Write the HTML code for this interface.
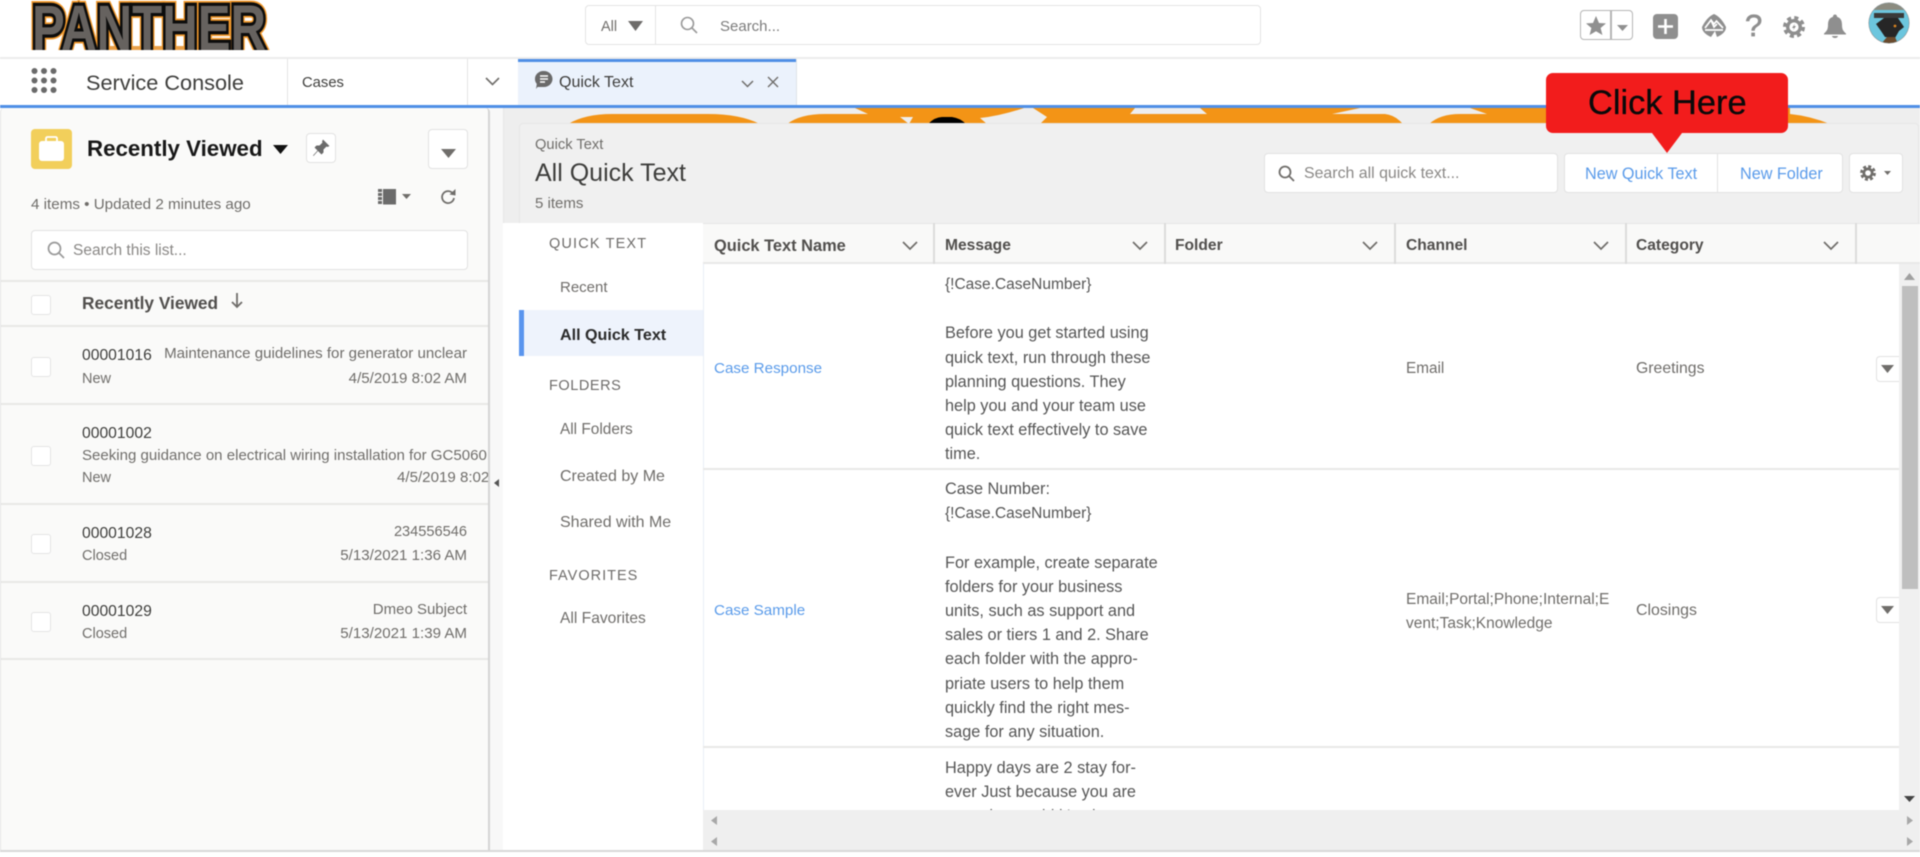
<!DOCTYPE html>
<html lang="en"><head><meta charset="utf-8"><title>Quick Text</title>
<style>
html,body{margin:0;padding:0;background:#fff}
#w{position:relative;width:1920px;height:857px;overflow:hidden;background:#fff;font-family:"Liberation Sans",sans-serif;color:#444;filter:blur(.4px)}
#w div,#w svg{position:absolute}
.t{white-space:nowrap;line-height:20px;height:20px;font-size:15px;margin-top:1px}
.g{color:#706e6b}.d{color:#3e3e3c}.b{color:#5a9bea}.h{font-weight:700;color:#514f4d;font-size:15.6px}
.box{background:#fff;border:1px solid #e2e2e2;box-sizing:border-box;border-radius:4px}
.cb{left:31px;width:20px;height:20px;background:#fff;border:1px solid #e4e4e4;box-sizing:border-box;border-radius:3px}
.ln{background:#e8e8e7;height:2px}
.cd{top:223px;width:2px;height:41px;background:#dcdcdb}
.nav{color:#6e6c6a;letter-spacing:1.15px;font-size:14.5px}
.msg{font-size:16.3px;line-height:24.2px;color:#565656;white-space:nowrap;left:945px;margin-top:1px}
.msg i{font-style:normal;font-size:15.5px}
</style></head><body>
<div id="w">

<!-- top bar -->
<svg style="left:24px;top:0" width="255" height="50" viewBox="0 0 255 50">
<polygon points="62,50 68,46 166,46 170,50" fill="#e8a04a"/>
<text x="8" y="50" font-family="Liberation Sans" font-weight="700" font-size="64" textLength="234" lengthAdjust="spacingAndGlyphs" fill="#66625f" stroke="#f39a2d" stroke-width="10" stroke-linejoin="miter" paint-order="stroke">PANTHER</text>
<text x="8" y="50" font-family="Liberation Sans" font-weight="700" font-size="64" textLength="234" lengthAdjust="spacingAndGlyphs" fill="#66625f" stroke="#0c0c0c" stroke-width="6.500" stroke-linejoin="miter" paint-order="stroke" aria-hidden="true">PANTHER</text>
</svg>

<div class="box" style="left:585px;top:5px;width:676px;height:40px;border-color:#e4e4e4"></div>
<div style="left:655px;top:6px;width:1px;height:38px;background:#e4e4e4"></div>
<div class="t g" style="left:601px;top:16px;font-size:14.5px">All</div>
<svg style="left:628px;top:21px" width="15" height="10"><polygon points="0,0 15,0 7.5,10" fill="#6e6c6a"/></svg>
<svg style="left:680px;top:16px" width="18" height="18" fill="none" stroke="#9a9a9a" stroke-width="1.6"><circle cx="7.5" cy="7.5" r="6"/><path d="M12 12l5 5"/></svg>
<div class="t" style="left:720px;top:16px;font-size:15px;color:#7c7c7c">Search...</div>

<div class="box" style="left:1580px;top:10px;width:53px;height:30px;border:1.5px solid #b5b5b5"></div>
<div style="left:1610px;top:10px;width:2px;height:30px;background:#b5b5b5"></div>
<svg style="left:1586px;top:16px" width="20" height="19"><polygon points="10,0 13,7 20,7.4 14.6,12 16.4,19 10,15.2 3.6,19 5.4,12 0,7.4 7,7" fill="#909090"/></svg>
<svg style="left:1617px;top:25px" width="11" height="6"><polygon points="0,0 11,0 5.5,6" fill="#909090"/></svg>
<svg style="left:1653px;top:14px" width="25" height="25"><rect width="25" height="25" rx="4" fill="#8f8f8f"/><path d="M12.5 5v15M5 12.5h15" stroke="#fff" stroke-width="2.6"/></svg>
<svg style="left:1702px;top:14px" width="24" height="23" viewBox="0 0 24 23"><path d="M12 0Q19 3 24 13Q24 19 15 23L13 17L9 23Q0 19 0 13Q5 3 12 0Z" fill="#8f8f8f"/><path d="M3 14L9 6L12 10L14.5 7L21 14M9 6L12 13L15 10M3 16H21" fill="none" stroke="#fff" stroke-width="1.7"/></svg>
<div class="t" style="left:1745px;top:10px;font-size:31px;line-height:30px;height:30px;color:#8f8f8f;-webkit-text-stroke:.7px #8f8f8f">?</div>
<svg style="left:1783px;top:16px" width="22" height="22" viewBox="-11 -11 22 22"><circle r="8" fill="#8f8f8f"/><circle r="9.3" fill="none" stroke="#8f8f8f" stroke-width="3.4" stroke-dasharray="4.1 3.2"/><circle r="4.6" fill="#fff"/><path d="M1-3.5L-2 1H0L-1 3.5L2-1H0Z" fill="#8f8f8f"/></svg>
<svg style="left:1823px;top:14px" width="24" height="24"><path d="M12 0.5a2 2 0 012 2.2C18 4 19 7 19 11c0 4 1 6 4 8.5V20.5H1V19.5C4 17 5 15 5 11c0-4 1-7 5-8.3A2 2 0 0112 0.5Z" fill="#8f8f8f"/><path d="M9 22h6a3 2 0 01-6 0Z" fill="#8f8f8f"/></svg>
<svg style="left:1868px;top:2px" width="42" height="42" viewBox="0 0 42 42"><defs><clipPath id="av"><circle cx="21" cy="21" r="20"/></clipPath></defs><circle cx="21" cy="21" r="20.5" fill="#8a8a8a"/><g clip-path="url(#av)"><rect width="42" height="42" fill="#6cc6de"/><rect x="0" y="0" width="42" height="8" fill="#8c8c80"/><rect x="6" y="11" width="30" height="5" fill="#3a3a3a"/><path d="M8 22L16 16H30L36 25L31 29L27 36L17 35L13 29Z" fill="#262626"/><circle cx="27" cy="24" r="1.4" fill="#d9821f"/><path d="M13 42L19 35H27L30 42Z" fill="#6a4a2c"/></g></svg>

<div style="left:0;top:57px;width:1920px;height:2px;background:#ececec"></div>

<!-- tab bar -->
<svg style="left:31px;top:68px" width="26" height="25" fill="#6a6a6a"><circle cx="3.5" cy="3" r="3"/><circle cx="13" cy="3" r="3"/><circle cx="22.5" cy="3" r="3"/><circle cx="3.5" cy="12.5" r="3"/><circle cx="13" cy="12.5" r="3"/><circle cx="22.5" cy="12.5" r="3"/><circle cx="3.5" cy="22" r="3"/><circle cx="13" cy="22" r="3"/><circle cx="22.5" cy="22" r="3"/></svg>
<div class="t" style="left:86px;top:72px;font-size:21.7px;color:#3e3e3c">Service Console</div>
<div style="left:287px;top:59px;width:1px;height:46px;background:#e4e4e4"></div>
<div class="t" style="left:302px;top:72px;font-size:14.8px;color:#3e3e3c">Cases</div>
<div style="left:467px;top:59px;width:1px;height:46px;background:#e4e4e4"></div>
<svg style="left:485px;top:77px" width="15" height="9" fill="none" stroke="#706e6b" stroke-width="1.6"><path d="M1 1l6.5 6.5L14 1"/></svg>
<div style="left:518px;top:59px;width:278px;height:46px;background:#ebf2fc;border-right:1px solid #dfe3e8"></div>
<div style="left:518px;top:59px;width:278px;height:3px;background:#4f8fe6"></div>
<svg style="left:535px;top:71px" width="18" height="18"><path d="M9 0a8.5 8 0 110 16H2.5L1 18 1.8 13A8.5 8 0 019 0Z" fill="#6a6a6a"/><path d="M5 5h8M5 8h8M5 11h5" stroke="#fff" stroke-width="1.4"/></svg>
<div class="t" style="left:559px;top:72px;font-size:16px;color:#3e3e3c">Quick Text</div>
<svg style="left:741px;top:80px" width="13" height="8" fill="none" stroke="#706e6b" stroke-width="1.5"><path d="M1 1l5.5 5.5L12 1"/></svg>
<svg style="left:767px;top:76px" width="12" height="12" fill="none" stroke="#706e6b" stroke-width="1.4"><path d="M1 1l10 10M11 1L1 11"/></svg>
<div style="left:0;top:105px;width:1920px;height:3px;background:#4f8fe6"></div>

<!-- background strip -->
<div style="left:503px;top:108px;width:1417px;height:115px;background:#eeeeee"></div>
<svg style="left:0;top:108px" width="1920" height="16" viewBox="0 108 1920 16">
<g fill="#f39416">
<path d="M568 124Q585 114 612 114L708 114Q740 114 760 124Z"/>
<path d="M787 124Q800 114 825 114L868 114L855 108L1024 108Q1000 116 980 118L987 124Z"/>
<path d="M1033 108L1135 108L1130 114L1207 114L1200 108L1360 108L1332 114L1385 114Q1395 115 1403 124L1040 124L1047 117Z"/>
<path d="M1429 124Q1440 114 1460 114L1487 114L1470 108L1790 108L1790 114Q1810 116 1830 124Z"/>
</g>
<path d="M900 117L913 117L909 124Z" fill="#eee"/>
<path d="M928 124Q935 117 942 117L952 117Q960 118 966 124Z" fill="#000"/>
</svg>

<!-- left panel -->
<div style="left:0;top:108px;width:490px;height:744px;background:#fafaf9;border-left:1px solid #e4e4e4;border-right:2px solid #d4d4d4;box-sizing:border-box;overflow:hidden;border-radius:4px 4px 0 0"></div>
<div style="left:490px;top:108px;width:13px;height:744px;background:#f8f8f8;border-right:1px solid #e6e6e6"></div>

<svg style="left:31px;top:129px" width="41" height="40"><rect width="41" height="40" rx="4" fill="#f2cf5b"/><rect x="8" y="12" width="25" height="20" rx="3" fill="#fff"/><path d="M15 12V9.500a1.500 1.500 0 011.500-1.500h8a1.500 1.500 0 011.500 1.500V12" fill="none" stroke="#fff" stroke-width="1.8"/></svg>
<div class="t" style="left:87px;top:136px;font-size:22.3px;font-weight:700;line-height:24px;height:24px;color:#181818">Recently Viewed</div>
<svg style="left:273px;top:145px" width="15" height="9"><polygon points="0,0 15,0 7.500,9" fill="#111"/></svg>
<div class="box" style="left:306px;top:133px;width:30px;height:30px"></div>
<svg style="left:312px;top:139px" width="18" height="18" fill="#6b6b6b"><path d="M11 0.500L17.500 7 15.500 8 14.500 7.500 11.500 10.500 11.500 13.500 9.500 15.500 6 12 1.500 17 1 16.500 5.500 11.500 2.500 8.500 4.500 6.500 7.500 6.500 10.500 3.500 10 2.500Z"/></svg>
<div class="box" style="left:428px;top:129px;width:40px;height:40px"></div>
<svg style="left:441px;top:149px" width="15" height="9"><polygon points="0,0 15,0 7.500,9" fill="#706e6b"/></svg>
<svg style="left:378px;top:189px" width="18" height="16" fill="#6b6b6b"><rect x="5" y="0" width="13" height="15.500"/><rect x="0" y="0" width="4" height="3"/><rect x="0" y="4" width="4" height="3"/><rect x="0" y="8" width="4" height="3"/><rect x="0" y="12" width="4" height="3"/></svg>
<svg style="left:402px;top:194px" width="9" height="5"><polygon points="0,0 9,0 4.500,5" fill="#706e6b"/></svg>
<svg style="left:440px;top:188px" width="17" height="17" fill="none" stroke="#706e6b" stroke-width="1.8"><path d="M13 5.700A6 6 0 1 0 14 10"/><polygon points="15.500,1 15.500,7.500 9.500,6.500" fill="#706e6b" stroke="none"/></svg>
<div class="t g" style="left:31px;top:194px;font-size:15.2px">4 items • Updated 2 minutes ago</div>
<div class="box" style="left:31px;top:230px;width:437px;height:40px"></div>
<svg style="left:47px;top:241px" width="18" height="18" fill="none" stroke="#9a9a9a" stroke-width="1.700"><circle cx="7.500" cy="7.500" r="6"/><path d="M12 12l5 5"/></svg>
<div class="t" style="left:73px;top:240px;font-size:15.5px;color:#8a8886">Search this list...</div>
<div class="ln" style="left:1px;top:280px;width:487px"></div>
<div class="cb" style="top:295px"></div>
<div class="t h" style="left:82px;top:292px;font-size:17.3px">Recently Viewed</div>
<svg style="left:231px;top:293px" width="12" height="16" fill="none" stroke="#706e6b" stroke-width="1.800"><path d="M6 0V14M1 9l5 5 5-5"/></svg>
<div class="ln" style="left:1px;top:325px;width:487px"></div>

<div class="cb" style="top:357px"></div>
<div class="t d" style="left:82px;top:345px;font-size:15.7px">00001016</div>
<div class="t g" style="right:1453px;top:343px;font-size:15.1px">Maintenance guidelines for generator unclear</div>
<div class="t g" style="left:82px;top:368px;font-size:14.500px">New</div>
<div class="t g" style="right:1453px;top:368px;font-size:15.1px">4/5/2019 8:02 AM</div>
<div class="ln" style="left:1px;top:403px;width:487px"></div>

<div class="cb" style="top:446px"></div>
<div class="t d" style="left:82px;top:423px;font-size:15.7px">00001002</div>
<div class="t g" style="left:82px;top:445px;font-size:15.05px">Seeking guidance on electrical wiring installation for GC5060</div>
<div class="t g" style="left:82px;top:467px;font-size:14.500px">New</div>
<div class="t g" style="left:397px;top:467px;width:91px;overflow:hidden;font-size:15.1px">4/5/2019 8:02 AM</div>
<div class="ln" style="left:1px;top:503px;width:487px"></div>
<svg style="left:494px;top:479px" width="5" height="8"><polygon points="5,0 5,8 0,4" fill="#555"/></svg>

<div class="cb" style="top:534px"></div>
<div class="t d" style="left:82px;top:523px;font-size:15.7px">00001028</div>
<div class="t g" style="right:1453px;top:521px;font-size:14.600px">234556546</div>
<div class="t g" style="left:82px;top:545px;font-size:14.500px">Closed</div>
<div class="t g" style="right:1453px;top:545px;font-size:15.1px">5/13/2021 1:36 AM</div>
<div class="ln" style="left:1px;top:581px;width:487px"></div>

<div class="cb" style="top:612px"></div>
<div class="t d" style="left:82px;top:601px;font-size:15.7px">00001029</div>
<div class="t g" style="right:1453px;top:599px;font-size:15px">Dmeo Subject</div>
<div class="t g" style="left:82px;top:623px;font-size:14.500px">Closed</div>
<div class="t g" style="right:1453px;top:623px;font-size:15.1px">5/13/2021 1:39 AM</div>
<div class="ln" style="left:1px;top:658px;width:487px"></div>

<!-- right panel header -->
<div style="left:519px;top:123px;width:1400px;height:100px;background:#f0f0f0;border:1px solid #e6e6e6;border-bottom:0;box-sizing:border-box;border-radius:4px 4px 0 0"></div>
<div class="t g" style="left:535px;top:134px;font-size:14.700px">Quick Text</div>
<div class="t d" style="left:535px;top:160px;font-size:25px;line-height:24px;height:24px">All Quick Text</div>
<div class="t g" style="left:535px;top:193px;font-size:15px">5 items</div>

<div class="box" style="left:1264px;top:153px;width:294px;height:40px"></div>
<svg style="left:1278px;top:165px" width="17" height="17" fill="none" stroke="#706e6b" stroke-width="1.800"><circle cx="7" cy="7" r="5.500"/><path d="M11 11l5 5"/></svg>
<div class="t" style="left:1304px;top:163px;font-size:15.9px;color:#8a8886">Search all quick text...</div>
<div class="box" style="left:1564px;top:153px;width:279px;height:40px"></div>
<div style="left:1717px;top:153px;width:1px;height:40px;background:#e2e2e2"></div>
<div class="t b" style="left:1585px;top:163px;font-size:16.2px">New Quick Text</div>
<div class="t b" style="left:1740px;top:163px;font-size:16.2px">New Folder</div>
<div class="box" style="left:1849px;top:153px;width:54px;height:40px"></div>
<svg style="left:1860px;top:165px" width="16" height="16" viewBox="-8 -8 16 16"><circle r="5.500" fill="#706e6b"/><circle r="6.500" fill="none" stroke="#706e6b" stroke-width="2.800" stroke-dasharray="3 2.100"/><circle r="2.800" fill="#fff"/></svg>
<svg style="left:1884px;top:171px" width="7" height="4"><polygon points="0,0 7,0 3.500,4" fill="#706e6b"/></svg>

<!-- left nav -->
<div style="left:503px;top:223px;width:200px;height:628px;background:#fff"></div>
<div class="t nav" style="left:549px;top:233px">QUICK TEXT</div>
<div class="t g" style="left:560px;top:277px;font-size:15px">Recent</div>
<div style="left:519px;top:310px;width:184px;height:46px;background:#eef3fc"></div>
<div style="left:519px;top:310px;width:5px;height:46px;background:#5a95ee"></div>
<div class="t" style="left:560px;top:324px;font-size:16.1px;font-weight:700;color:#2b2b2b">All Quick Text</div>
<div class="t nav" style="left:549px;top:375px;letter-spacing:.55px">FOLDERS</div>
<div class="t g" style="left:560px;top:419px;font-size:15.4px">All Folders</div>
<div class="t g" style="left:560px;top:466px;font-size:16px">Created by Me</div>
<div class="t g" style="left:560px;top:512px;font-size:16px">Shared with Me</div>
<div class="t nav" style="left:549px;top:565px;letter-spacing:1px">FAVORITES</div>
<div class="t g" style="left:560px;top:608px;font-size:15.6px">All Favorites</div>

<!-- table -->
<div style="left:703px;top:223px;width:1217px;height:41px;background:#f9f9f8;border-top:1px solid #e6e6e6;border-bottom:2px solid #e8e8e8;box-sizing:border-box"></div>
<div class="cd" style="left:933px"></div><div class="cd" style="left:1164px"></div><div class="cd" style="left:1394px"></div><div class="cd" style="left:1625px"></div><div class="cd" style="left:1855px"></div>
<div class="t h" style="left:714px;top:235px;font-size:16.4px">Quick Text Name</div>
<div class="t h" style="left:945px;top:235px">Message</div>
<div class="t h" style="left:1175px;top:235px">Folder</div>
<div class="t h" style="left:1406px;top:235px">Channel</div>
<div class="t h" style="left:1636px;top:235px">Category</div>
<svg style="left:902px;top:241px" width="16" height="10" fill="none" stroke="#706e6b" stroke-width="1.700"><path d="M1 1l7 7 7-7"/></svg>
<svg style="left:1132px;top:241px" width="16" height="10" fill="none" stroke="#706e6b" stroke-width="1.700"><path d="M1 1l7 7 7-7"/></svg>
<svg style="left:1362px;top:241px" width="16" height="10" fill="none" stroke="#706e6b" stroke-width="1.700"><path d="M1 1l7 7 7-7"/></svg>
<svg style="left:1593px;top:241px" width="16" height="10" fill="none" stroke="#706e6b" stroke-width="1.700"><path d="M1 1l7 7 7-7"/></svg>
<svg style="left:1823px;top:241px" width="16" height="10" fill="none" stroke="#706e6b" stroke-width="1.700"><path d="M1 1l7 7 7-7"/></svg>

<div style="left:703px;top:264px;width:1px;height:546px;background:#e8eef7"></div>
<div class="msg" style="top:271px"><i>{!Case.CaseNumber}</i><br><br>Before you get started using<br>quick text, run through these<br>planning questions. They<br>help you and your team use<br>quick text effectively to save<br>time.</div>
<div class="ln" style="left:703px;top:468px;width:1196px"></div>
<div class="t b" style="left:714px;top:358px;font-size:15.2px">Case Response</div>
<div class="t g" style="left:1406px;top:358px;font-size:15.3px">Email</div>
<div class="t g" style="left:1636px;top:358px;font-size:15.8px">Greetings</div>
<div class="box" style="left:1876px;top:356px;width:24px;height:26px;border-right:0;border-radius:4px 0 0 4px"></div>
<svg style="left:1881px;top:365px" width="13" height="8"><polygon points="0,0 13,0 6.500,8" fill="#706e6b"/></svg>

<div class="msg" style="top:476px">Case Number:<br><i>{!Case.CaseNumber}</i><br><br>For example, create separate<br>folders for your business<br>units, such as support and<br>sales or tiers 1 and 2. Share<br>each folder with the appro-<br>priate users to help them<br>quickly find the right mes-<br>sage for any situation.</div>
<div class="ln" style="left:703px;top:746px;width:1196px"></div>
<div class="t b" style="left:714px;top:600px;font-size:15.2px">Case Sample</div>
<div class="t g" style="left:1406px;top:589px;font-size:15.5px">Email;Portal;Phone;Internal;E</div>
<div class="t g" style="left:1406px;top:613px;font-size:15.5px">vent;Task;Knowledge</div>
<div class="t g" style="left:1636px;top:600px;font-size:15.9px">Closings</div>
<div class="box" style="left:1876px;top:597px;width:24px;height:26px;border-right:0;border-radius:4px 0 0 4px"></div>
<svg style="left:1881px;top:606px" width="13" height="8"><polygon points="0,0 13,0 6.500,8" fill="#706e6b"/></svg>

<div class="msg" style="top:755px">Happy days are 2 stay for-<br>ever Just because you are<br>sometimes told it's okay to</div>

<!-- scrollbars -->
<div style="left:1899px;top:264px;width:21px;height:546px;background:#f0f0f0"></div>
<div style="left:1902px;top:286px;width:16px;height:303px;background:#bfbfbf"></div>
<svg style="left:1904px;top:273px" width="11" height="7"><polygon points="0,7 11,7 5.500,0" fill="#a0a0a0"/></svg>
<svg style="left:1904px;top:796px" width="11" height="6"><polygon points="0,0 11,0 5.500,6" fill="#444"/></svg>
<div style="left:703px;top:810px;width:1217px;height:40px;background:#efefef"></div>
<svg style="left:711px;top:816px" width="6" height="9"><polygon points="6,0 6,9 0,4.500" fill="#a8a8a8"/></svg>
<svg style="left:711px;top:837px" width="6" height="9"><polygon points="6,0 6,9 0,4.500" fill="#a8a8a8"/></svg>
<svg style="left:1907px;top:816px" width="6" height="9"><polygon points="0,0 0,9 6,4.500" fill="#a8a8a8"/></svg>
<svg style="left:1907px;top:837px" width="6" height="9"><polygon points="0,0 0,9 6,4.500" fill="#a8a8a8"/></svg>
<div style="left:0;top:850px;width:1920px;height:2px;background:#d8d8d8"></div>

<!-- callout -->
<svg style="left:1546px;top:73px" width="243" height="81"><path d="M7 0H235a7 7 0 017 7V53a7 7 0 01-7 7H136L121 80 106 60H7a7 7 0 01-7-7V7a7 7 0 017-7Z" fill="#f21c1c"/></svg>
<div class="t" style="left:1588px;top:83px;margin-top:0;font-size:34.4px;line-height:40px;height:40px;color:#0a0a0a;-webkit-text-stroke:.3px #0a0a0a">Click Here</div>

</div>
</body></html>
